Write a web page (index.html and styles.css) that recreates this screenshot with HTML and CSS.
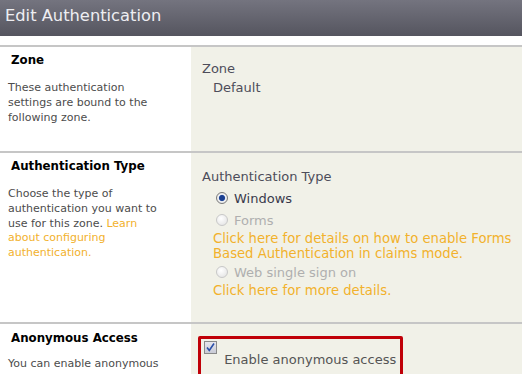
FILE: index.html
```html
<!DOCTYPE html>
<html lang="en">
<head>
    <meta charset="UTF-8">
    <meta name="viewport" content="width=device-width, initial-scale=1.0">
    <title>Edit Authentication</title>
    <link rel="stylesheet" href="styles.css">
</head>
<body>
    <div class="titlebar">Edit Authentication</div>
    <div class="sections">
        <div class="section section-zone">
            <div class="section-info">
                <div class="section-title">Zone</div>
                <div class="section-desc">These authentication settings are bound to the following zone.</div>
            </div>
            <div class="section-body">
                <div class="field-label">Zone</div>
                <div class="field-value">Default</div>
            </div>
        </div>
        <div class="section section-auth">
            <div class="section-info">
                <div class="section-title">Authentication Type</div>
                <div class="section-desc">Choose the type of authentication you want to use for this zone. <a href="#" class="link">Learn about configuring authentication.</a></div>
            </div>
            <div class="section-body">
                <div class="field-label">Authentication Type</div>
                <div class="option checked"><span class="radio"></span>Windows</div>
                <div class="option disabled"><span class="radio"></span>Forms</div>
                <a href="#" class="link option-link">Click here for details on how to enable Forms Based Authentication in claims mode.</a>
                <div class="option disabled"><span class="radio"></span>Web single sign on</div>
                <a href="#" class="link option-link">Click here for more details.</a>
            </div>
        </div>
        <div class="section section-anon">
            <div class="section-info">
                <div class="section-title">Anonymous Access</div>
                <div class="section-desc">You can enable anonymous</div>
            </div>
            <div class="section-body">
                <div class="highlight">
                    <span class="checkbox">
                        <svg width="13" height="13" viewBox="0 0 13 13"><path d="M3 6.5 L5.3 9.5 L10 2.5" fill="none" stroke="#2a4fa8" stroke-width="1.6"/></svg>
                    </span>
                    <span class="check-label">Enable anonymous access</span>
                </div>
            </div>
        </div>
    </div>
</body>
</html>
```

FILE: styles.css
```css
body {
    margin: 0;
    background-color: #fff;
    font-family: "DejaVu Sans", Verdana, sans-serif;
    color: #4c4c4c;
    overflow: hidden;
}
.titlebar {
    height: 36px;
    box-sizing: border-box;
    padding: 5px 0 0 5px;
    background: linear-gradient(#74747f, #55555f);
    color: #eeeef2;
    font-size: 16.3px;
    line-height: 22px;
}
.sections {
    margin-top: 9px;
}
.section {
    display: grid;
    grid-template-columns: 191px 1fr;
    border-top: 2px solid #c6c6c6;
}
.section-zone {
    height: 104px;
}
.section-auth {
    height: 169px;
}
.section-info {
    padding: 6px 20px 0 8px;
}
.section-title {
    font-weight: bold;
    color: #000;
    font-size: 11.8px;
    padding-left: 3px;
    line-height: 14px;
}
.section-desc {
    margin-top: 14px;
    font-size: 11px;
    line-height: 14.8px;
}
.section-body {
    background-color: #f1f1e8;
    padding: 12px 0 0 22px;
    font-size: 13px;
    line-height: 15px;
    color: #4d4d5a;
}
.field-label {
    margin-left: -11px;
    line-height: 19px;
}
.section-auth .section-body {
    padding-top: 16px;
}
.section-auth .field-label {
    line-height: 15px;
    margin-bottom: 3px;
}
.field-value {
    line-height: 19px;
}
.option {
    display: flex;
    align-items: center;
    height: 22px;
    margin-left: 3px;
    color: #3a3a4c;
}
.option.disabled {
    color: #afafaf;
}
.radio {
    width: 12px;
    height: 12px;
    border-radius: 50%;
    margin-right: 6px;
    box-sizing: border-box;
    border: 1px solid #c8c8c8;
    background: radial-gradient(circle at 40% 35%, #fff, #e0e0e0);
}
.option.checked .radio {
    border: 1px solid #7a7a7a;
    background: radial-gradient(circle, #1b3f8f 0 2.5px, #5f7fc0 3px, #f4f4f4 3.6px, #d8d8d8);
}
.link {
    color: #f2b12c;
    text-decoration: none;
}
.option-link {
    display: block;
    max-width: 306px;
    margin-top: 1px;
    font-size: 13.2px;
    line-height: 14.5px;
}
.section-anon .section-body {
    padding: 12px 0 0 7px;
}
.section-anon .section-info {
    padding-top: 7px;
}
.section-anon .section-desc {
    margin-top: 12px;
}
.highlight {
    width: 205px;
    height: 60px;
    box-sizing: border-box;
    border: 3px solid #c00008;
    border-radius: 2px;
    padding: 2px 0 0 3px;
}
.checkbox {
    display: inline-block;
    width: 13px;
    height: 13px;
    box-sizing: border-box;
    border: 1px solid #8a8a8a;
    background: linear-gradient(#e6e6ee, #c9cbd6);
    vertical-align: top;
}
.checkbox svg {
    display: block;
    margin: -1px;
}
.check-label {
    display: inline-block;
    margin-top: 11px;
    margin-left: 3px;
    font-size: 13px;
    color: #555;
}
```
